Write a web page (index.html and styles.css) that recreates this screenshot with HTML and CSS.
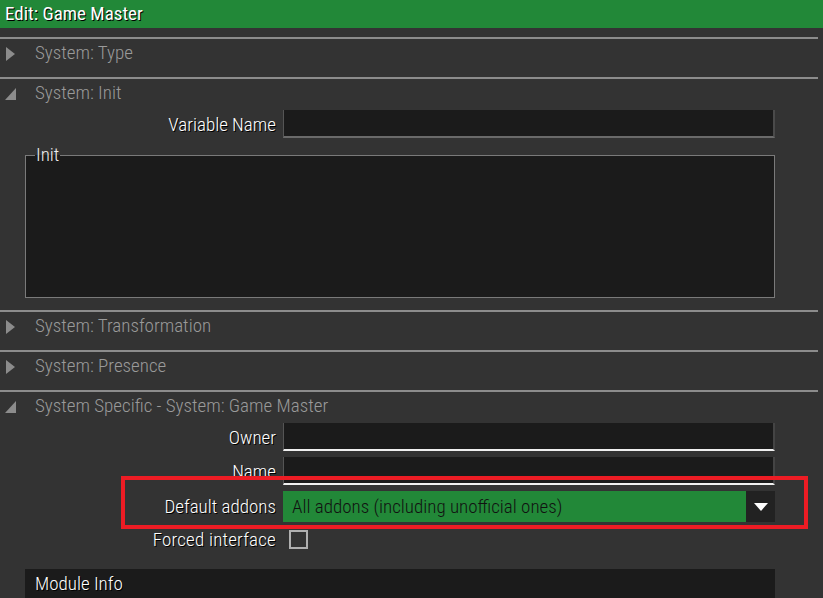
FILE: index.html
```html
<!DOCTYPE html>
<html>
<head>
    <meta charset="UTF-8">
    <title>Edit: Game Master</title>
    <link rel="stylesheet" href="styles.css">
</head>
<body>
    <div class="titlebar">Edit: Game Master</div>

    <div class="sections">
        <div class="section">
            <div class="head"><span class="tri closed"></span>System: Type</div>
        </div>

        <div class="section open">
            <div class="head"><span class="tri opened"></span>System: Init</div>
            <div class="row">
                <label>Variable Name</label>
                <div class="edit"></div>
            </div>
            <fieldset class="codebox">
                <legend>Init</legend>
            </fieldset>
        </div>

        <div class="section">
            <div class="head"><span class="tri closed"></span>System: Transformation</div>
        </div>

        <div class="section">
            <div class="head"><span class="tri closed"></span>System: Presence</div>
        </div>

        <div class="section open">
            <div class="head"><span class="tri opened"></span>System Specific - System: Game Master</div>
            <div class="row">
                <label>Owner</label>
                <div class="edit line"></div>
            </div>
            <div class="row">
                <label>Name</label>
                <div class="edit line"></div>
            </div>
            <div class="row tight">
                <label>Default addons</label>
                <div class="combo">
                    <span class="value">All addons (including unofficial ones)</span>
                    <span class="drop"><svg width="14" height="8" viewBox="0 0 14 8"><polygon points="0,0 14,0 7,8" fill="#fff"/></svg></span>
                </div>
            </div>
            <div class="row">
                <label class="wide">Forced interface</label>
                <div><span class="check"></span></div>
            </div>
            <div class="modinfo">Module Info</div>
        </div>
    </div>

    <div class="highlight"></div>
</body>
</html>
```

FILE: styles.css
```css
body {
    margin: 0;
    background-color: #333333;
    font-family: "Roboto Condensed", Roboto, "Liberation Sans", sans-serif;
    font-stretch: condensed;
    font-size: 19px;
    font-weight: 300;
    color: #fff;
    position: relative;
    height: 598px;
    overflow: hidden;
}

.titlebar {
    height: 28px;
    line-height: 27px;
    padding-left: 5px;
    font-weight: 400;
    background-color: #228838;
    text-shadow: 1px 1px 0 #000;
}

.sections { margin-top: 9px; }

.section {
    margin-right: 5px;
    border-top: 2px solid #8c8c8c;
    padding-bottom: 7px;
}
.section.open { padding-bottom: 12px; }

.head {
    height: 31px;
    line-height: 28px;
    color: #9a9a9a;
    display: flex;
    align-items: flex-start;
}

.tri {
    width: 35px;
    height: 28px;
    position: relative;
    flex: none;
}
.tri.closed::before {
    content: "";
    position: absolute;
    left: 6px; top: 8px;
    border-left: 9px solid #8c8c8c;
    border-top: 7px solid transparent;
    border-bottom: 7px solid transparent;
}
.tri.opened::before {
    content: "";
    position: absolute;
    left: 5px; top: 9px;
    border-right: 11px solid #8c8c8c;
    border-top: 12px solid transparent;
}

.row {
    display: grid;
    grid-template-columns: 276px 1fr;
    column-gap: 7px;
    margin-right: 43px;
    margin-bottom: 6px;
    align-items: center;
}
.row.tight { margin-bottom: 2px; }
.row label {
    text-align: right;
    text-shadow: 1px 1px 0 #000;
}
.row label.wide { letter-spacing: 0.2px; }

.edit {
    height: 26px;
    background-color: #1b1b1b;
    border-left: 1px solid #555;
    border-right: 2px solid #4a4a4a;
    border-bottom: 2px solid #6a6a6a;
}
.edit.line { border-bottom-color: #f0f0f0; border-right-color: #444; }

.codebox {
    margin: 8px 43px 0 25px;
    padding: 0;
    height: 152px;
    box-sizing: border-box;
    border: 1px solid #7a7a7a;
    background-color: #1b1b1b;
}
.codebox legend {
    margin-left: 9px;
    padding: 0 1px;
    line-height: 18px;
    color: #eee;
}

.combo {
    display: flex;
    height: 31px;
    background-color: #228838;
}
.combo .value {
    flex: 1;
    padding-left: 9px;
    line-height: 31px;
    color: #111;
}
.combo .drop {
    width: 29px;
    background-color: #222;
    display: flex;
    align-items: center;
    justify-content: center;
}

.check {
    display: block;
    margin: 6px 0 6px 6px;
    width: 15px;
    height: 15px;
    border: 2px solid #b0b0b0;
}

.modinfo {
    margin: 14px 43px 0 25px;
    height: 40px;
    padding-left: 10px;
    line-height: 30px;
    background-color: #1b1b1b;
    text-shadow: 1px 1px 0 #000;
}

.highlight {
    position: absolute;
    left: 121px;
    top: 476px;
    width: 679px;
    height: 45px;
    border: 4px solid #ed1c24;
}
```
